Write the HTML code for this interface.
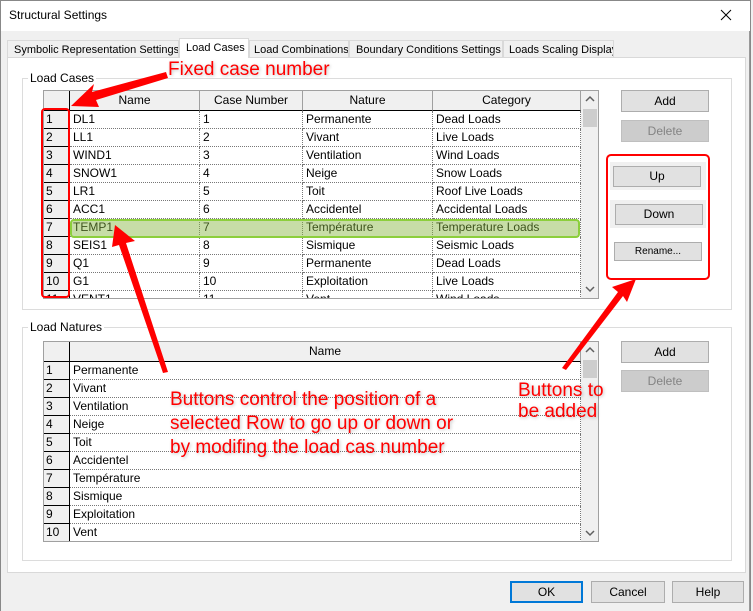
<!DOCTYPE html>
<html><head><meta charset="utf-8"><style>
*{box-sizing:border-box;margin:0;padding:0}
body{width:753px;height:611px;overflow:hidden;background:#f0f0f0;font-family:"Liberation Sans",Arial,sans-serif;font-size:12px;color:#000;position:relative}
.a{position:absolute}
.tab{position:absolute;white-space:nowrap;font-size:11px;overflow:hidden}
.btn{position:absolute;background:#e1e1e1;border:1px solid #adadad;text-align:center;font-size:12px}
.dis{background:#cccccc;border-color:#bfbfbf;color:#838383}
.grid{position:absolute;background:#fff;border:1px solid #a0a0a0;overflow:hidden}
.hdr{position:absolute;top:0;height:20px;background:#f0f0f0;border-right:1px solid #a0a0a0;border-bottom:1px solid #000;text-align:center;line-height:19px}
.cell{position:absolute;height:18px;line-height:17px;padding-left:3px;border-bottom:1px dotted #777;border-right:1px dotted #777;white-space:nowrap;overflow:hidden}
.rh{position:absolute;height:18px;line-height:17px;padding-left:2px;background:#f0f0f0;border-bottom:1px solid #000;border-right:1px solid #000;width:26px}
.sb{position:absolute;top:0;width:18px;background:#f0f0f0}
.red{color:#f00;font-size:19px;position:absolute;line-height:24px;white-space:nowrap;text-shadow:1px 1px 3px rgba(0,0,0,.25)}
</style></head><body>
<div class="a" style="left:0;top:0;width:751px;height:611px;border:1px solid #888;border-bottom:none;background:#f0f0f0"></div>
<div class="a" style="left:1px;top:1px;width:749px;height:30px;background:#fff"></div>
<div class="a" style="left:9px;top:8px;font-size:12px">Structural Settings</div>
<svg class="a" style="left:720px;top:9px" width="12" height="12"><path d="M1 1L11 11M11 1L1 11" stroke="#000" stroke-width="1"/></svg>
<div class="a" style="left:1px;top:31px;width:749px;height:580px;border-right:1px solid #999"></div>
<!-- tab panel -->
<div class="a" style="left:7px;top:57px;width:739px;height:516px;background:#fff;border:1px solid #d9d9d9"></div>
<div class="tab" style="left:7px;top:40px;width:172px;height:18px;border:1px solid #d9d9d9;background:#f0f0f0;padding:3px 0 0 6px">Symbolic Representation Settings</div>
<div class="tab" style="left:179px;top:38px;width:70px;height:20px;border:1px solid #d9d9d9;border-bottom:none;background:#fff;padding:3px 0 0 6px">Load Cases</div>
<div class="tab" style="left:249px;top:40px;width:100px;height:18px;border:1px solid #d9d9d9;background:#f0f0f0;padding:3px 0 0 4px">Load Combinations</div>
<div class="tab" style="left:349px;top:40px;width:154px;height:18px;border:1px solid #d9d9d9;background:#f0f0f0;padding:3px 0 0 6px">Boundary Conditions Settings</div>
<div class="tab" style="left:503px;top:40px;width:111px;height:18px;border:1px solid #d9d9d9;background:#f0f0f0;padding:3px 0 0 5px">Loads Scaling Display</div>
<!-- group boxes -->
<div class="a" style="left:22px;top:78px;width:710px;height:232px;border:1px solid #dcdcdc"></div>
<div class="a" style="left:28px;top:71px;background:#fff;padding:0 2px">Load Cases</div>
<div class="a" style="left:22px;top:327px;width:710px;height:234px;border:1px solid #dcdcdc"></div>
<div class="a" style="left:28px;top:320px;background:#fff;padding:0 2px">Load Natures</div>
<!-- grid 1 -->
<div class="grid" style="left:43px;top:90px;width:556px;height:209px">
<div class="hdr" style="left:0;width:26px;border-right:1px solid #000"></div>
<div class="hdr" style="left:26px;width:130px">Name</div>
<div class="hdr" style="left:156px;width:103px">Case Number</div>
<div class="hdr" style="left:259px;width:130px">Nature</div>
<div class="hdr" style="left:389px;width:148px">Category</div>
<div class="sb" style="left:537px;height:209px"><div class="a" style="left:2px;top:18px;width:14px;height:18px;background:#cdcdcd"></div>
<svg class="a" style="left:4px;top:4px" width="10" height="8"><path d="M1 6L5 2L9 6" stroke="#606060" stroke-width="1.5" fill="none"/></svg>
<svg class="a" style="left:4px;top:194px" width="10" height="8"><path d="M1 2L5 6L9 2" stroke="#606060" stroke-width="1.5" fill="none"/></svg></div>
<div id="r1"></div>
</div>
<!-- grid 2 -->
<div class="grid" style="left:43px;top:341px;width:556px;height:201px">
<div class="hdr" style="left:0;width:26px;border-right:1px solid #000"></div>
<div class="hdr" style="left:26px;width:511px">Name</div>
<div class="sb" style="left:537px;height:201px"><div class="a" style="left:2px;top:18px;width:14px;height:18px;background:#cdcdcd"></div>
<svg class="a" style="left:4px;top:4px" width="10" height="8"><path d="M1 6L5 2L9 6" stroke="#606060" stroke-width="1.5" fill="none"/></svg>
<svg class="a" style="left:4px;top:187px" width="10" height="8"><path d="M1 2L5 6L9 2" stroke="#606060" stroke-width="1.5" fill="none"/></svg></div>
<div id="r2"></div>
</div>
<script>
var d=[["DL1","1","Permanente","Dead Loads"],["LL1","2","Vivant","Live Loads"],["WIND1","3","Ventilation","Wind Loads"],["SNOW1","4","Neige","Snow Loads"],["LR1","5","Toit","Roof Live Loads"],["ACC1","6","Accidentel","Accidental Loads"],["TEMP1","7","Température","Temperature Loads"],["SEIS1","8","Sismique","Seismic Loads"],["Q1","9","Permanente","Dead Loads"],["G1","10","Exploitation","Live Loads"],["VENT1","11","Vent","Wind Loads"]];
var L=[26,156,259,389],W=[130,103,130,148],h="";
d.forEach(function(r,i){var t=20+i*18;h+='<div class="rh" style="left:0;top:'+t+'px">'+(i+1)+'</div>';r.forEach(function(c,j){h+='<div class="cell" style="left:'+L[j]+'px;top:'+t+'px;width:'+W[j]+'px">'+c+'</div>'})});
document.getElementById("r1").outerHTML=h;
var n=["Permanente","Vivant","Ventilation","Neige","Toit","Accidentel","Température","Sismique","Exploitation","Vent"];h="";
n.forEach(function(c,i){var t=20+i*18;h+='<div class="rh" style="left:0;top:'+t+'px">'+(i+1)+'</div><div class="cell" style="left:26px;top:'+t+'px;width:511px">'+c+'</div>'});
document.getElementById("r2").outerHTML=h;
</script>
<!-- buttons -->
<div class="btn" style="left:621px;top:90px;width:88px;height:22px;line-height:20px">Add</div>
<div class="btn dis" style="left:621px;top:120px;width:88px;height:22px;line-height:20px">Delete</div>
<div class="btn" style="left:621px;top:341px;width:88px;height:22px;line-height:20px">Add</div>
<div class="btn dis" style="left:621px;top:370px;width:88px;height:22px;line-height:20px">Delete</div>
<div class="a" style="left:606px;top:154px;width:104px;height:126px;border:2px solid #f00;border-radius:5px;background:#fff"></div>
<div class="a" style="left:610px;top:162px;width:96px;height:28px;background:#f0f0f0"></div>
<div class="btn" style="left:613px;top:166px;width:88px;height:21px;line-height:19px">Up</div>
<div class="a" style="left:610px;top:200px;width:96px;height:28px;background:#f0f0f0"></div>
<div class="btn" style="left:615px;top:204px;width:88px;height:21px;line-height:19px">Down</div>
<div class="btn" style="left:614px;top:242px;width:88px;height:19px;line-height:17px;font-size:10px">Rename...</div>
<div class="btn" style="left:510px;top:581px;width:73px;height:22px;line-height:18px;border:2px solid #0078d7">OK</div>
<div class="btn" style="left:591px;top:581px;width:74px;height:22px;line-height:20px">Cancel</div>
<div class="btn" style="left:672px;top:581px;width:72px;height:22px;line-height:20px">Help</div>
<!-- annotations -->
<div class="a" style="left:70px;top:219px;width:510px;height:19px;background:rgba(130,180,60,.45);border:2px solid #8ccf3c;border-radius:4px"></div>
<div class="a" style="left:41px;top:108px;width:29px;height:190px;border:2px solid #f00;border-radius:4px"></div>
<svg class="a" style="left:0;top:0" width="753" height="611">
<polygon points="71,106 94,84 92,92 166,72 168,78 96,100 99,107" fill="#f00"/>
<polygon points="115,225 135,241 126,243 168,372 163,373 119,245 112,247" fill="#f00"/>
<polygon points="636,279 627,302 623,296 566,370 562,368 618,292 612,287" fill="#f00"/>
</svg>
<div class="red" style="left:168px;top:58px">Fixed case number</div>
<div class="red" style="left:170px;top:388px">Buttons control the position of a<br>selected Row to go up or down or<br>by modifing the load cas number</div>
<div class="red" style="left:518px;top:380px;line-height:21px">Buttons to<br>be added</div>
</body></html>
